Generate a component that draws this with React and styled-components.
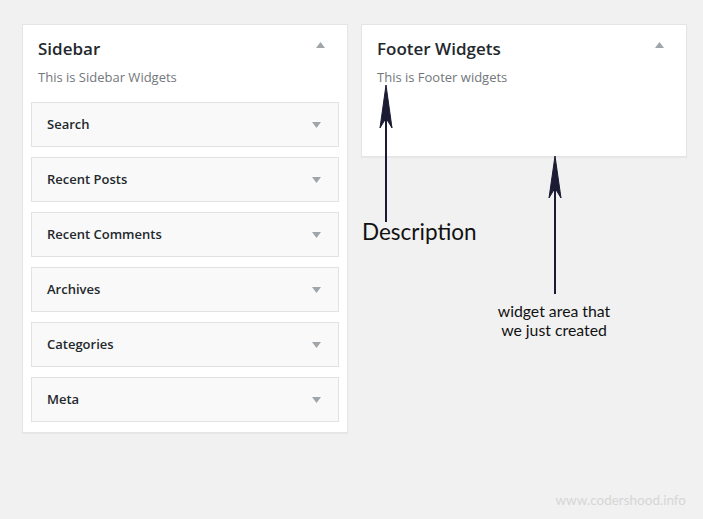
import React from 'react'
import styled, { createGlobalStyle } from 'styled-components'

const GlobalStyle = createGlobalStyle`
  html, body {
    margin: 0;
    padding: 0;
    background: #f1f1f1;
  }
  body {
    font-family: 'Open Sans', 'Liberation Sans', sans-serif;
    color: #23282d;
  }
`

const widgets = ['Search', 'Recent Posts', 'Recent Comments', 'Archives', 'Categories', 'Meta']

const Arrow = ({ down }) => (
  <svg width="9" height="6" viewBox="0 0 9 6">
    <path d={down ? 'M0 0 L9 0 L4.5 6 Z' : 'M0 6 L9 6 L4.5 0 Z'} fill="#a0a5aa" />
  </svg>
)

const App = () => {
  return (
    <Page>
      <GlobalStyle />
      <Panel>
        <Header>
          <Title>Sidebar</Title>
          <Toggle><Arrow /></Toggle>
        </Header>
        <Description>This is Sidebar Widgets</Description>
        <WidgetList>
          {widgets.map((w) => (
            <Widget key={w}>
              <span>{w}</span>
              <Arrow down />
            </Widget>
          ))}
        </WidgetList>
      </Panel>
      <Panel>
        <Header>
          <Title>Footer Widgets</Title>
          <Toggle><Arrow /></Toggle>
        </Header>
        <Description>This is Footer widgets</Description>
        <DropArea />
      </Panel>

      {/* annotation arrows drawn over the screenshot */}
      <Annotations width="703" height="519" viewBox="0 0 703 519">
        <g stroke="#1b1b33" strokeWidth="2" fill="#1b1b33">
          <line x1="386" y1="100" x2="386" y2="222" />
          <path d="M386 85 L392 128 L386 118 L380 128 Z" strokeWidth="1" />
          <line x1="555" y1="175" x2="555" y2="294" />
          <path d="M555 156 L561 198 L555 188 L549 198 Z" strokeWidth="1" />
        </g>
      </Annotations>
      <Label>Description</Label>
      <Note>
        widget area that
        <br />
        we just created
      </Note>
      <Watermark>www.codershood.info</Watermark>
    </Page>
  )
}
export default App

const Page = styled.div`
  position: relative;
  width: 703px;
  height: 519px;
  box-sizing: border-box;
  padding: 24px 0 0 22px;
  display: flex;
  align-items: flex-start;
  gap: 13px;
  overflow: hidden;
`

const Panel = styled.div`
  width: 326px;
  box-sizing: border-box;
  background: #fff;
  border: 1px solid #e5e5e5;
  box-shadow: 0 1px 1px rgba(0, 0, 0, 0.04);
  padding-bottom: 10px;
`

const Header = styled.div`
  display: flex;
  align-items: center;
  justify-content: space-between;
  padding: 12px 22px 0 15px;
`

const Title = styled.h2`
  margin: 0;
  font-size: 17px;
  line-height: 24px;
  font-weight: 600;
  color: #23282d;
`

const Toggle = styled.span`
  display: flex;
  margin-top: -8px;
`

const Description = styled.p`
  margin: 6px 0 0;
  padding: 0 15px;
  font-size: 13px;
  line-height: 20px;
  color: #72777c;
`

const WidgetList = styled.div`
  display: flex;
  flex-direction: column;
  gap: 10px;
  margin: 15px 8px 0;
`

const Widget = styled.div`
  height: 45px;
  box-sizing: border-box;
  display: flex;
  align-items: center;
  justify-content: space-between;
  padding: 0 17px 2px 15px;
  background: #f9f9f9;
  border: 1px solid #e2e2e2;
  font-size: 13px;
  font-weight: 600;
  color: #23282d;

  svg {
    margin-top: 2px;
  }
`

const DropArea = styled.div`
  height: 59px;
`

const Annotations = styled.svg`
  position: absolute;
  left: 0;
  top: 0;
  pointer-events: none;
`

const Label = styled.div`
  position: absolute;
  left: 362px;
  top: 216px;
  font-family: Lato, 'Liberation Sans', sans-serif;
  font-size: 22.5px;
  line-height: 32px;
  color: #111;
`

const Note = styled.div`
  position: absolute;
  left: 479px;
  top: 301px;
  width: 150px;
  text-align: center;
  font-family: Lato, 'Liberation Sans', sans-serif;
  font-size: 15.8px;
  line-height: 19px;
  color: #111;
`

const Watermark = styled.div`
  position: absolute;
  right: 17px;
  top: 490px;
  font-family: Lato, 'Liberation Sans', sans-serif;
  font-size: 13.5px;
  line-height: 20px;
  color: #d6d6d6;
`
